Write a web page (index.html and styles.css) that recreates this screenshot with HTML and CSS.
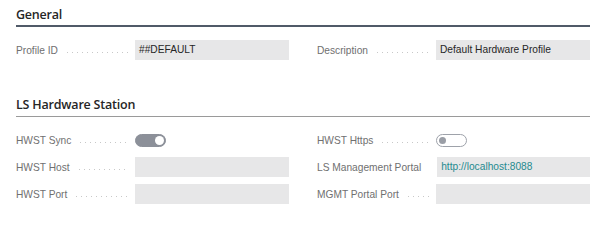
FILE: index.html
```html
<!DOCTYPE html>
<html>
<head>
    <meta charset="UTF-8">
    <title>Hardware Profile</title>
    <link rel="stylesheet" href="styles.css">
</head>
<body>
<div class="page">
    <section class="group">
        <h2 class="group-title active">General</h2>
        <div class="fields">
            <div class="field">
                <span class="label">Profile ID</span><span class="leader"></span>
                <div class="value">##DEFAULT</div>
            </div>
            <div class="field">
                <span class="label">Description</span><span class="leader"></span>
                <div class="value">Default Hardware Profile</div>
            </div>
        </div>
    </section>

    <section class="group">
        <h2 class="group-title">LS Hardware Station</h2>
        <div class="fields">
            <div class="field">
                <span class="label">HWST Sync</span><span class="leader"></span>
                <div class="toggle on"><span class="knob"></span></div>
            </div>
            <div class="field">
                <span class="label">HWST Https</span><span class="leader"></span>
                <div class="toggle"><span class="knob"></span></div>
            </div>
            <div class="field">
                <span class="label">HWST Host</span><span class="leader"></span>
                <div class="value"></div>
            </div>
            <div class="field">
                <span class="label">LS Management Portal</span><span class="leader"></span>
                <div class="value link">http://localhost:8088</div>
            </div>
            <div class="field">
                <span class="label">HWST Port</span><span class="leader"></span>
                <div class="value"></div>
            </div>
            <div class="field">
                <span class="label">MGMT Portal Port</span><span class="leader"></span>
                <div class="value"></div>
            </div>
        </div>
    </section>
</div>
</body>
</html>
```

FILE: styles.css
```css
body{margin:0;padding:0;background:#fff;}
.page{
    padding:6px 10px 0 16px;
    font-family:"Liberation Sans",Arial,sans-serif;
    width:574px;
}
.group{margin-bottom:36px;}
.group-title{
    margin:0;
    height:20px;
    line-height:18px;
    font-family:"Open Sans","Noto Sans",sans-serif;
    font-size:12.5px;
    font-weight:600;
    letter-spacing:-0.2px;
    color:#262626;
    border-bottom:1px solid #9a9a9a;
}
.group-title.active{
    border-bottom:2px solid #505a68;
    height:19px;
}
.fields{
    display:grid;
    grid-template-columns:273px 273px;
    column-gap:28px;
    row-gap:7px;
    padding-top:13px;
}
.field{
    display:flex;
    align-items:center;
    height:20px;
}
.label{
    font-size:10.2px;
    color:#707070;
    white-space:nowrap;
    padding-right:9px;
}
.leader{
    flex:1;
    height:6px;
    margin-right:7px;
    background:linear-gradient(to right,#c8c8c8 1px,transparent 1px) repeat-x;
    background-size:5px 1px;
    background-position:left bottom;
}
.value{
    width:150px;
    height:20px;
    line-height:20px;
    padding-left:4px;
    background:#e7e7e8;
    font-size:10.2px;
    color:#262626;
}
.value.link{color:#1f8a8f;}
.toggle{
    position:relative;
    width:31px;
    height:13px;
    margin-right:123px;
    border-radius:7px;
    box-sizing:border-box;
    border:1px solid #9ea2aa;
    background:#fff;
}
.toggle .knob{
    position:absolute;
    top:2px;
    left:2px;
    width:7px;
    height:7px;
    border-radius:50%;
    background:#9a9ea6;
}
.toggle.on{
    background:#8c9099;
    border-color:#8c9099;
}
.toggle.on .knob{
    left:auto;
    right:1px;
    top:1px;
    width:9px;
    height:9px;
    background:#fff;
}
```
